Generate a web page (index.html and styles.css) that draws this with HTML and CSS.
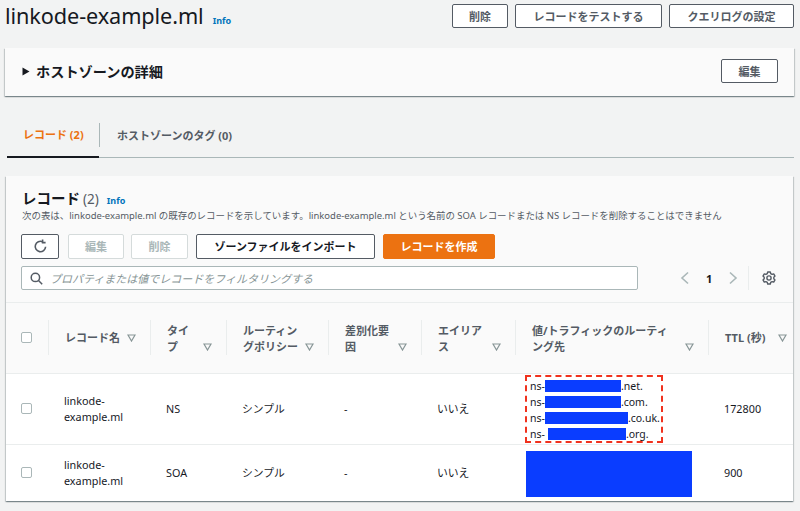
FILE: index.html
```html
<!DOCTYPE html>
<html lang="ja">
<head>
<meta charset="utf-8">
<title>linkode-example.ml</title>
<link rel="stylesheet" href="styles.css">
</head>
<body>
<header class="page-head">
  <div class="title-wrap"><h1>linkode-example.ml</h1><a class="info info-title">Info</a></div>
  <div class="actions">
    <button class="btn btn-del">削除</button>
    <button class="btn btn-test">レコードをテストする</button>
    <button class="btn btn-log">クエリログの設定</button>
  </div>
</header>

<section class="card zone">
  <div class="zone-title"><svg class="caret" width="8" height="9" viewBox="0 0 8 9"><path d="M0.5 0.5L7.5 4.5L0.5 8.5Z" fill="#16191f"/></svg><h2>ホストゾーンの詳細</h2></div>
  <button class="btn btn-edit">編集</button>
</section>

<nav class="tabs">
  <a class="tab tab-active">レコード (2)</a>
  <a class="tab tab-other">ホストゾーンのタグ (0)</a>
</nav>

<section class="card records">
  <div class="rec-head">
    <div class="rec-title"><h2>レコード</h2><span class="count">(2)</span><a class="info">Info</a></div>
    <p class="desc">次の表は、linkode-example.ml の既存のレコードを示しています。linkode-example.ml という名前の SOA レコードまたは NS レコードを削除することはできません</p>
    <div class="toolbar">
      <button class="btn btn-refresh" aria-label="更新"><svg width="15" height="15" viewBox="0 0 15 15" fill="none" stroke="#545b64" stroke-width="1.6"><path d="M12.6 7.8A5.2 5.2 0 1 1 9.6 2.8"/><path d="M9.6 0.4V3.6H12.6" stroke-linejoin="miter"/></svg></button>
      <button class="btn btn-off btn-e">編集</button>
      <button class="btn btn-off btn-d">削除</button>
      <button class="btn btn-import">ゾーンファイルをインポート</button>
      <button class="btn btn-primary">レコードを作成</button>
    </div>
    <div class="filter-row">
      <div class="search"><svg width="13" height="13" viewBox="0 0 13 13" fill="none" stroke="#545b64" stroke-width="1.5"><circle cx="5.4" cy="5.4" r="4.2"/><path d="M8.5 8.5L12.2 12.2"/></svg><span class="placeholder">プロパティまたは値でレコードをフィルタリングする</span></div>
      <div class="pager">
        <svg class="chev" width="10" height="14" viewBox="0 0 10 14" fill="none" stroke="#aab7b8" stroke-width="1.6"><path d="M8 1.5L2 7L8 12.5"/></svg>
        <span class="page-no">1</span>
        <svg class="chev" width="10" height="14" viewBox="0 0 10 14" fill="none" stroke="#aab7b8" stroke-width="1.6"><path d="M2 1.5L8 7L2 12.5"/></svg>
      </div>
      <div class="settings"><svg width="14" height="14" viewBox="0 0 14 14" fill="none" stroke="#545b64" stroke-width="1.4"><path d="M5.7 1H8.3L8.7 2.6L10.1 3.4L11.7 2.9L13 5.1L11.8 6.2V7.8L13 8.9L11.7 11.1L10.1 10.6L8.7 11.4L8.3 13H5.7L5.3 11.4L3.9 10.6L2.3 11.1L1 8.9L2.2 7.8V6.2L1 5.1L2.3 2.9L3.9 3.4L5.3 2.6Z" stroke-linejoin="round"/><circle cx="7" cy="7" r="2.1"/></svg></div>
    </div>
  </div>

  <table class="grid">
    <colgroup><col class="c1"><col class="c2"><col class="c3"><col class="c4"><col class="c5"><col class="c6"><col class="c7"><col class="c8"></colgroup>
    <thead>
      <tr>
        <th class="check-cell"><span class="cb"></span></th>
        <th><div class="th-in"><span>レコード名</span><svg class="tri" width="9" height="8" viewBox="0 0 9 8"><path d="M1 1H8L4.5 7Z" fill="none" stroke="#879596" stroke-width="1.2"/></svg></div></th>
        <th><div class="th-in low"><span>タイ<br>プ</span><svg class="tri" width="9" height="8" viewBox="0 0 9 8"><path d="M1 1H8L4.5 7Z" fill="none" stroke="#879596" stroke-width="1.2"/></svg></div></th>
        <th><div class="th-in low"><span>ルーティン<br>グポリシー</span><svg class="tri" width="9" height="8" viewBox="0 0 9 8"><path d="M1 1H8L4.5 7Z" fill="none" stroke="#879596" stroke-width="1.2"/></svg></div></th>
        <th><div class="th-in low"><span>差別化要<br>因</span><svg class="tri" width="9" height="8" viewBox="0 0 9 8"><path d="M1 1H8L4.5 7Z" fill="none" stroke="#879596" stroke-width="1.2"/></svg></div></th>
        <th><div class="th-in low"><span>エイリア<br>ス</span><svg class="tri" width="9" height="8" viewBox="0 0 9 8"><path d="M1 1H8L4.5 7Z" fill="none" stroke="#879596" stroke-width="1.2"/></svg></div></th>
        <th><div class="th-in low"><span>値/トラフィックのルーティ<br>ング先</span><svg class="tri" width="9" height="8" viewBox="0 0 9 8"><path d="M1 1H8L4.5 7Z" fill="none" stroke="#879596" stroke-width="1.2"/></svg></div></th>
        <th><div class="th-in th-last"><span>TTL (秒)</span><svg class="tri" width="9" height="8" viewBox="0 0 9 8"><path d="M1 1H8L4.5 7Z" fill="none" stroke="#879596" stroke-width="1.2"/></svg></div></th>
      </tr>
    </thead>
    <tbody>
      <tr class="row1">
        <td class="check-cell"><span class="cb"></span></td>
        <td>linkode-example.ml</td>
        <td>NS</td>
        <td>シンプル</td>
        <td>-</td>
        <td>いいえ</td>
        <td class="val-cell">
          <div class="ns-box">
            <div>ns-<span class="mask m1"></span>.net.</div>
            <div>ns-<span class="mask m1"></span>.com.</div>
            <div>ns-<span class="mask m2"></span>.co.uk.</div>
            <div>ns-<span class="mask m3"></span>.org.</div>
          </div>
        </td>
        <td>172800</td>
      </tr>
      <tr class="row2">
        <td class="check-cell"><span class="cb"></span></td>
        <td>linkode-example.ml</td>
        <td>SOA</td>
        <td>シンプル</td>
        <td>-</td>
        <td>いいえ</td>
        <td class="val-cell"><div class="mask-big"></div></td>
        <td>900</td>
      </tr>
    </tbody>
  </table>
</section>
</body>
</html>
```

FILE: styles.css
```css
* { box-sizing: border-box; }
html, body { margin: 0; height: 100%; }
body {
  width: 800px;
  height: 511px;
  overflow: hidden;
  background: #f2f3f3;
  color: #16191f;
  font-family: "Noto Sans", "Noto Sans CJK JP", sans-serif;
  font-size: 11px;
  padding: 0 6px 0 5px;
}
h1, h2, p { margin: 0; }

.page-head { display: flex; justify-content: space-between; height: 48px; padding-top: 4px; }
.title-wrap { display: flex; align-items: baseline; gap: 9px; margin-top: -6px; }
h1 { font-size: 21.7px; font-weight: 400; line-height: 36px; letter-spacing: -0.1px; }
.info { color: #0073bb; font-size: 9px; font-weight: 700; }
.actions { display: flex; gap: 7px; }

.btn {
  height: 24px;
  padding: 0;
  border: 1px solid #545b64;
  border-radius: 2px;
  background: #fff;
  color: #545b64;
  font: 700 11px/1 "Noto Sans", "Noto Sans CJK JP", sans-serif;
}
.btn-del { width: 56px; }
.btn-test { width: 147px; }
.btn-log { width: 125px; }

.card { background: #fff; box-shadow: 0 1px 1px 0 rgba(0, 28, 36, .3), 1px 1px 1px 0 rgba(0, 28, 36, .15), -1px 1px 1px 0 rgba(0, 28, 36, .15); }

.zone { display: flex; align-items: center; justify-content: space-between; height: 48px; padding: 0 16px 2px 17px; background: #fafafa; }
.zone-title { display: flex; align-items: center; gap: 6px; }
.zone-title h2 { font-size: 14.2px; font-weight: 700; }
.btn-edit { width: 57px; height: 24px; }

.tabs { display: flex; height: 62px; margin: 0 0 18px 2px; padding-top: 24px; border-bottom: 1px solid #aab7b8; }
.tab { display: flex; align-items: center; height: 38px; font-weight: 700; font-size: 11px; color: #545b64; }
.tab-active { width: 92px; padding: 0 0 8px 16px; color: #ec7211; border-bottom: 2px solid #16191f; margin-bottom: -1px; }
.tab-other { height: 24px; margin-top: 3px; padding-left: 17px; border-left: 1px solid #aab7b8; }

.records { height: 325px; margin-left: 1px; width: 787px; background: #fafafa; }
.rec-head { height: 127px; padding: 12px 16px 0 15px; border-bottom: 1px solid #eaeded; }
.rec-title { display: flex; align-items: baseline; gap: 3px; height: 21px; margin-left: 1px; }
.rec-title h2 { font-size: 14.5px; font-weight: 700; line-height: 20px; }
.count { font-size: 13.5px; color: #545b64; }
.rec-title .info { margin-left: 5px; }
.desc { font-size: 9.45px; line-height: 14px; color: #545b64; white-space: nowrap; margin-left: 1px; }

.toolbar { display: flex; gap: 8px; margin-top: 11px; }
.btn-refresh { width: 38px; height: 25px; display: flex; align-items: center; justify-content: center; }
.btn-off { border-color: #d5dbdb; color: #aab7b8; height: 25px; }
.btn-e { width: 56px; margin-left: 1px; }
.btn-d { width: 57px; margin-left: -1px; }
.btn-import { width: 179px; height: 25px; color: #16191f; }
.btn-primary { width: 112px; height: 25px; background: #ec7211; border-color: #ec7211; color: #fff; }

.filter-row { display: flex; align-items: center; margin-top: 7px; height: 24px; }
.search { display: flex; align-items: center; gap: 7px; width: 617px; height: 24px; padding-left: 8px; background: #fff; border: 1px solid #aab7b8; border-radius: 2px; }
.placeholder { font-size: 11px; font-style: italic; color: #879596; }
.pager { display: flex; align-items: center; width: 68px; margin-left: 42px; gap: 16px; height: 24px; }
.page-no { font-weight: 700; font-size: 11px; }
.settings { display: flex; justify-content: flex-end; align-items: center; width: 28px; height: 24px; border-left: 1px solid #eaeded; }

.grid { width: 787px; border-collapse: collapse; table-layout: fixed; }
.c1 { width: 42px; } .c2 { width: 102px; } .c3 { width: 76px; } .c4 { width: 102px; }
.c5 { width: 93px; } .c6 { width: 94px; } .c7 { width: 193px; } .c8 { width: 85px; }

thead tr { height: 70px; background: #fafafa; border-bottom: 1px solid #eaeded; }
th { padding: 0; font-size: 11px; font-weight: 700; color: #545b64; text-align: left; line-height: 16px; vertical-align: middle; }
.th-in { display: flex; justify-content: space-between; align-items: center; gap: 4px; height: 35px; padding: 0 14px 0 16px; border-left: 1px solid #eaeded; }
.th-in.low { align-items: flex-end; }
.th-in.low .tri { margin-bottom: 4px; }
.th-in.th-last { padding-right: 6px; }
.tri { flex: none; }
.th-in span { flex: 0 1 auto; white-space: nowrap; }

tbody tr { background: #fff; }
td { padding: 0 16px 0 16px; font-size: 10.8px; line-height: 16px; color: #16191f; vertical-align: middle; }
.row1 { height: 71px; border-bottom: 1px solid #eaeded; }
.row2 { height: 57px; }
.check-cell { padding: 0 0 0 15px; text-align: left; }
.cb { display: block; width: 11px; height: 11px; background: #fff; border: 1px solid #aab7b8; border-radius: 2px; }
.val-cell { padding: 0 0 0 10px; }
.ns-box { width: 138px; height: 68px; padding: 1px 0 0 3px; border: 2px dashed #f0321e; font-size: 10.5px; line-height: 16px; white-space: nowrap; }
.mask { display: inline-block; height: 12px; vertical-align: -2px; background: #0a3dff; }
.m1 { width: 76px; } .m2 { width: 83px; } .m3 { width: 78px; margin-left: 3px; }
.mask-big { width: 166px; height: 46px; margin: 2px 0 0 1px; background: #0a3dff; }
```
